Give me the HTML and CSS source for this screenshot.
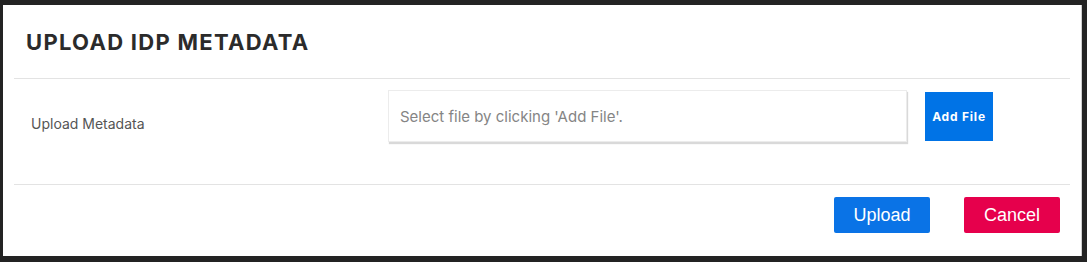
FILE: index.html
```html
<!DOCTYPE html>
<html lang="en">
<head>
    <meta charset="UTF-8">
    <meta name="viewport" content="width=device-width, initial-scale=1.0">
    <title>Upload IDP Metadata</title>
    <link rel="stylesheet" href="styles.css">
</head>
<body>
    <div class="modal">
        <header class="modal-header">
            <h2>UPLOAD IDP METADATA</h2>
        </header>
        <div class="divider"></div>
        <section class="modal-body">
            <label class="field-label" for="metadataFile">Upload Metadata</label>
            <div class="file-input" id="metadataFile">Select file by clicking 'Add File'.</div>
            <button type="button" class="btn-add">Add File</button>
        </section>
        <div class="divider"></div>
        <footer class="modal-footer">
            <button type="button" class="btn btn-primary">Upload</button>
            <button type="button" class="btn btn-danger">Cancel</button>
        </footer>
    </div>
</body>
</html>
```

FILE: styles.css
```css
body {
    margin: 0;
    padding: 0;
    background-color: #232323;
    font-family: Inter, "Noto Sans", sans-serif;
}
.modal {
    margin: 5px 0 0 3px;
    width: 1079px;
    height: 251px;
    background: white;
    box-sizing: border-box;
    border-right: 1px solid #cfcfcf;
}
.modal-header {
    height: 73px;
    padding-left: 23px;
    box-sizing: border-box;
    display: flex;
    align-items: center;
}
.modal-header h2 {
    margin: 0;
    font-size: 22px;
    font-weight: 700;
    letter-spacing: 1.3px;
    color: #2b2b2b;
}
.divider {
    height: 1px;
    margin: 0 11px;
    background-color: #e3e3e3;
}
.modal-body {
    height: 105px;
    display: flex;
    align-items: flex-start;
    padding: 11px 0 0 28px;
    box-sizing: border-box;
}
.field-label {
    width: 357px;
    font-size: 14px;
    line-height: 18px;
    color: #555;
    padding-top: 25px;
}
.file-input {
    width: 519px;
    height: 52px;
    box-sizing: border-box;
    border: 1px solid #ececec;
    box-shadow: 1px 2px 1px #d9d9d9;
    padding-left: 11px;
    display: flex;
    align-items: center;
    font-size: 15px;
    color: #858585;
}
.btn-add {
    margin: 2px 0 0 18px;
    width: 68px;
    height: 49px;
    background-color: #0073e6;
    color: white;
    border: none;
    font-family: Inter, sans-serif;
    font-weight: 700;
    font-size: 12px;
    letter-spacing: 0.8px;
    padding: 0;
    cursor: pointer;
}
.modal-footer {
    display: flex;
    justify-content: flex-end;
    gap: 34px;
    padding: 12px 21px 0 0;
}
.btn {
    width: 96px;
    height: 36px;
    border: none;
    border-radius: 2px;
    color: white;
    font-family: "Liberation Sans", Arial, sans-serif;
    font-size: 18px;
    cursor: pointer;
}
.btn-primary {
    background-color: #0a73e6;
}
.btn-danger {
    background-color: #e6004c;
}
```
